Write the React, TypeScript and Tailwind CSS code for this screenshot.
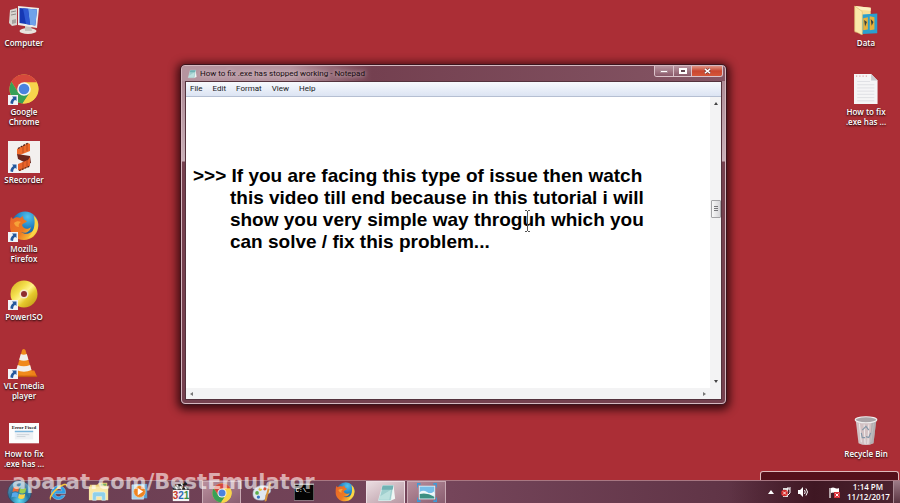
import { FC, ReactNode } from 'react'

const noteText = [
  '>>> If you are facing this type of issue then watch',
  '       this video till end because in this tutorial i will',
  '       show you very simple way throguh which you',
  '       can solve / fix this problem...',
].join('\n')

const ChromeIcon: FC = () => (
  <svg viewBox="0 0 30 30" className="size-full">
    <circle cx="15" cy="15" r="14.5" fill="#f3cf45" />
    <path d="M2.4 7.8A14.5 14.5 0 0 1 27.8 8.4L15 8.6 9.2 18.4z" fill="#d6473c" />
    <path d="M2.4 7.8A14.5 14.5 0 0 0 13.6 29.4L20.8 18.5 15 21.5 9.3 18.5z" fill="#38a156" />
    <path d="M27.8 8.4H15l6 10-7.4 11A14.5 14.5 0 0 0 27.8 8.4z" fill="#f7d54c" />
    <circle cx="15" cy="15" r="6.8" fill="#f5f5f0" />
    <circle cx="15" cy="15" r="5.3" fill="#4a83e0" />
  </svg>
)

const FirefoxIcon: FC = () => (
  <svg viewBox="0 0 30 30" className="size-full">
    <defs>
      <radialGradient id="fx-globe" cx=".6" cy=".2" r=".9">
        <stop offset="0" stopColor="#52c3ee" />
        <stop offset=".5" stopColor="#1c78bd" />
        <stop offset="1" stopColor="#173b78" />
      </radialGradient>
      <linearGradient id="fx-tail" x1="0" y1="0" x2="1" y2=".6">
        <stop offset="0" stopColor="#e8622a" />
        <stop offset=".6" stopColor="#ee7a22" />
        <stop offset="1" stopColor="#fbd23e" />
      </linearGradient>
    </defs>
    <circle cx="16" cy="14" r="13.5" fill="url(#fx-globe)" />
    <path
      d="M2 6l2 2c2-2 5-2 7-1l3-2c0 3 1 4 4 5-1 2-4 2-5 4 1 4 6 5 9 2-1 5-6 7-10 5 5 4 13 1 14-6 1-4 0-7-2-11 5 4 6 9 5 13-1 7-7 12-14 12C7 29 1 23 1 16 1 12 1 9 2 6z"
      fill="url(#fx-tail)"
    />
    <path d="M25 5c4 4 5 9 3 14-2 4-5 7-9 8 5-5 8-12 6-22z" fill="#fbd546" />
    <path d="M5 12c2-2 5-2 7-1-2 1-3 3-2 5-2 0-4-1-5-4z" fill="#f7a238" />
  </svg>
)

const NotepadIcon: FC = () => (
  <svg viewBox="0 0 24 24" className="size-full">
    <path d="M8 3h13l-3 18H3z" fill="#9fcfce" stroke="#d9efee" />
    <path d="M8 3h13l-1 5H6.600z" fill="#6fb1b3" />
    <path d="M5 16l13-8-2 12H4z" fill="#c9e8e5" opacity=".7" />
    <path d="M21 3l2 16-5 2z" fill="#f0f7f5" />
  </svg>
)

const ComputerIcon: FC = () => (
  <svg viewBox="0 0 30 30" className="size-full">
    <path d="M1 5l7-2v17l-5 1-3-3z" fill="#d9d5cf" />
    <path d="M2 7l5-1M2 10l5-1" stroke="#8e8b88" />
    <path d="M3 15l4-1v4l-4 1z" fill="#a7a39e" />
    <ellipse cx="19" cy="26" rx="8.500" ry="3" fill="#e8e4de" />
    <path d="M16 20h6l1 6h-7z" fill="#c8c3bd" />
    <path d="M9 1l21 2-2 20-19-3z" fill="#eeece8" />
    <path d="M10.500 3l17.500 1.600-1.700 16-15.800-2.600z" fill="#1638b4" />
    <path d="M19 3.800l9 .8-1.700 16-5.300-.9z" fill="#6fa2ea" />
    <path d="M14 3.300l5 .5 2 15.900-4-.7z" fill="#2e59d3" />
  </svg>
)

const SRecorderIcon: FC = () => (
  <svg viewBox="0 0 32 32" className="size-8 shrink-0">
    <path d="M0 0h32v32H0z" fill="#f3f0ee" />
    <path d="M9 8l11-6 2 1v7l-10 4-3-1z" fill="#ef6a2a" />
    <path d="M9 13l13 2 1 7-3 1-10-5z" fill="#6d251b" />
    <path d="M22 16v9l-10 5-2-1v-6l10-4z" fill="#e9632a" />
    <path d="M10 7.500L20 2M11 29.500L22 25" stroke="#4b211a" strokeWidth="1.200" strokeDasharray="2 1" />
    <path d="M15 5v7M15 21v7M19 3v7M19 19v7" stroke="#b84a1d" />
  </svg>
)

const PowerIsoIcon: FC = () => (
  <svg viewBox="0 0 30 30" className="size-full">
    <defs>
      <linearGradient id="disc" x1="0" y1="0" x2="1" y2="1">
        <stop offset="0" stopColor="#d2a51b" />
        <stop offset=".35" stopColor="#f4e04d" />
        <stop offset=".5" stopColor="#fff38c" />
        <stop offset=".65" stopColor="#e5c92c" />
        <stop offset="1" stopColor="#b98c12" />
      </linearGradient>
    </defs>
    <circle cx="15" cy="15" r="13.500" fill="url(#disc)" />
    <circle cx="15" cy="15" r="4.500" fill="#f3e9cb" />
    <circle cx="15" cy="15" r="3" fill="#8e2c2e" />
  </svg>
)

const VlcIcon: FC = () => (
  <svg viewBox="0 0 30 32" className="size-full">
    <path d="M4 24h22l3 7H1z" fill="#ee8218" />
    <path d="M1 29.500h28V31H1z" fill="#c35e10" />
    <path d="M13 2q1.500-2 3.500 0L24 27q-9 4-18 0z" fill="#f08a1c" />
    <path d="M11.600 6.500q3 1.500 6.400 0l1.800 6q-5 2-10 0z" fill="#f1efed" />
    <path d="M8.300 18q6.500 3 13.200 0l1.500 5.500q-8 3.500-16.300 0z" fill="#f1efed" />
  </svg>
)

const ErrorShotIcon: FC = () => (
  <svg viewBox="0 0 31 21" className="mt-1 w-full">
    <path d="M0 0h31v21H0z" fill="#fdfdfd" />
    <text x="15.500" y="6" textAnchor="middle" fontSize="5" fontWeight="700" fontFamily="Liberation Serif, serif" fill="#222">
      Error Fixed
    </text>
    <path d="M6 8h19v9H6z" fill="#eef1f4" />
    <path d="M6 8h19v1.500H6z" fill="#7cb6dc" />
    <path d="M8 12h13M8 14h9" stroke="#c5cdd4" strokeWidth=".8" />
  </svg>
)

const DataFolderIcon: FC = () => (
  <svg viewBox="0 0 30 32" className="size-full">
    <path d="M3 1l17 2v26H3z" fill="#f6dd95" />
    <path d="M3 1l17 2v3L8 5z" fill="#fdf0c0" />
    <path d="M11 10l16-1v21l-16 1z" fill="#2aa0cf" />
    <path d="M12 14l5-1v13l-5 1zM19 12l5 1v13l-5 1z" fill="#e8b13b" />
    <path d="M13 16l3 2-2 5zM20 15l3 3-2 4z" fill="#37433f" />
    <path d="M3 1l8 6v25l-8-4z" fill="#fbe9a9" stroke="#d9bb6b" strokeWidth=".6" />
  </svg>
)

const TextFileIcon: FC = () => (
  <svg viewBox="0 0 22 28" className="h-full">
    <path d="M0 0h16l6 6v22H0z" fill="#f5f5f6" />
    <path d="M16 0l6 6h-6z" fill="#c9cbd0" />
    <path d="M3 7h12M3 10h16M3 13h16M3 16h16M3 19h16M3 22h16M3 25h16" stroke="#dcdde2" strokeWidth=".8" />
    <path d="M2 2h12" stroke="#dc9a9a" strokeDasharray="1 2" />
  </svg>
)

const RecycleBinIcon: FC = () => (
  <svg viewBox="0 0 28 32" className="size-full">
    <path d="M3 4l22 0-3 25q-8 4-16 0z" fill="#d8dadc" opacity=".85" />
    <path d="M7 8l2 20M12 9l1 21M17 9l-1 21M22 8l-3 20" stroke="#f7f7f7" opacity=".8" />
    <path d="M20 6l5-1-3 24-4 1z" fill="#9fa1a5" opacity=".6" />
    <ellipse cx="14" cy="4" rx="11.500" ry="3.200" fill="#a9a3a6" stroke="#f0f0f0" strokeWidth="1.200" />
    <path d="M10 15l4-4 3 4M9 18l1 5h3M19 18l-2 5-3-1" fill="none" stroke="#8397a8" strokeWidth="1.200" />
  </svg>
)

const StartOrb: FC = () => (
  <svg viewBox="0 0 26 26" className="size-full">
    <defs>
      <radialGradient id="orb" cx=".5" cy=".85" r=".9">
        <stop offset="0" stopColor="#62dcf2" />
        <stop offset=".45" stopColor="#23719e" />
        <stop offset="1" stopColor="#7aa0b8" />
      </radialGradient>
    </defs>
    <circle cx="13" cy="13" r="12.300" fill="url(#orb)" stroke="#33455f" strokeWidth=".8" />
    <path d="M6.500 8q3-2 6 0l-.8 4.600q-3-2-6 0z" fill="#ec6a38" />
    <path d="M13.500 8.300q3 2 6.500 0l-.9 4.700q-3.200 2-6.400 0z" fill="#9bcf4f" />
    <path d="M5.400 13.700q3-2 6 0l-.8 4.600q-3-2-6 0z" fill="#58a9ea" />
    <path d="M12.400 14.200q3.200 2 6.500 0l-.9 4.600q-3.200 2-6.400 0z" fill="#fbd347" />
  </svg>
)

const IeIcon: FC = () => (
  <svg viewBox="0 0 24 24" className="size-full">
    <path
      d="M21 14H8.500c.4 4 5.500 4.800 7.500 1.800h4.500C17 24 4 22.500 4 13S17 1.500 20.500 9q.8 2 .5 5zM8.700 10.500h7.800c-.5-3.500-6.800-3.700-7.800 0z"
      fill="#2f9fe6"
      stroke="#bfe5fa"
      strokeWidth=".5"
    />
    <path d="M3 22C-2 17 14 1 21 2c3 .5 2 3 1 4.500.5-2-.5-2.800-2.500-2.500C13 6 3 16 3 22z" fill="#f5c640" />
  </svg>
)

const ExplorerIcon: FC = () => (
  <svg viewBox="0 0 24 22" className="size-full">
    <path d="M2 3h8l2-2h9v5H2z" fill="#e9cc73" />
    <path d="M1 5h21v15H1z" fill="#f9e7a4" />
    <path d="M14 2h6v2h-6z" fill="#71b26a" />
    <path d="M5 20v-7q0-2 2-2h10q2 0 2 2v7h-4v-4H9v4z" fill="#8fd0ea" stroke="#dff3fb" strokeWidth=".6" />
  </svg>
)

const MediaPlayerIcon: FC = () => (
  <svg viewBox="0 0 20 20" className="size-full">
    <path d="M5 1h13v16H5z" fill="#5c9fd0" />
    <path d="M1 2h13v16H1z" fill="#a8d3ee" stroke="#e3f2fb" strokeWidth=".6" />
    <circle cx="9.500" cy="9.500" r="6.500" fill="#ef8422" stroke="#fbd9ae" strokeWidth=".6" />
    <path d="M7.500 5.500l6 4-6 4z" fill="#fff" />
  </svg>
)

const PlayerClassicIcon: FC = () => (
  <svg viewBox="0 0 20 22" className="size-full">
    <path d="M1 8h18v13H1z" fill="#f4f4f4" />
    <path d="M1 5h18v3.500H1zM1 4l15-4 1 3-15 4z" fill="#1e1e1e" />
    <path d="M4 5l2 3M9 5l2 3M14 5l2 3M5 3l2 2M10 2l2 2" stroke="#f4f4f4" strokeWidth="1.500" />
    <g fontSize="11" fontWeight="700" fontFamily="Liberation Sans, sans-serif">
      <text x="1" y="19" fill="#c93b2f">3</text>
      <text x="7" y="19" fill="#2d69b9">2</text>
      <text x="13" y="19" fill="#3b9147">1</text>
    </g>
  </svg>
)

const PaintIcon: FC = () => (
  <svg viewBox="0 0 24 24" className="size-full">
    <path d="M1 14C1 7 8 4 14 5s7 4 6 7-5 1-5 4 1 5-5 5-9-2-9-7z" fill="#dfe8f0" stroke="#9fb2c4" strokeWidth=".6" />
    <circle cx="5.500" cy="13" r="2" fill="#5aae4b" />
    <circle cx="9" cy="9" r="1.800" fill="#e4c23c" />
    <circle cx="14" cy="8.500" r="1.800" fill="#d9503c" />
    <circle cx="7" cy="17.500" r="1.800" fill="#3775c4" />
    <path d="M19 1l2 1-5 19-2 2v-3z" fill="#d9963a" />
  </svg>
)

const CmdIcon: FC = () => (
  <svg viewBox="0 0 20 17" className="size-full">
    <path d="M0 0h20v17H0z" fill="#a9a9a9" />
    <path d="M.5 1.500h19v15H.5z" fill="#050505" />
    <text x="1.500" y="8" fontSize="6" fontWeight="700" fontFamily="Liberation Mono, monospace" fill="#eee">
      C:\_
    </text>
  </svg>
)

const PictureIcon: FC = () => (
  <svg viewBox="0 0 22 20" className="size-full">
    <path d="M2 2h18v15H2z" fill="#dceff8" />
    <path d="M3 3h16v7H3z" fill="#76bde9" />
    <path d="M3 9q4-3 8 0t8-1v4H3z" fill="#f0f8fa" />
    <path d="M3 11q8-2 16 3v2H3z" fill="#3d8f83" />
    <path d="M0 4V0h4M18 0h4v4M22 15v4h-4M4 19H0v-4" fill="none" stroke="#3c9bd9" strokeWidth="2" />
  </svg>
)

const ShortcutArrow: FC = () => (
  <svg viewBox="0 0 10 10" className="absolute bottom-0 left-0 size-[10px]">
    <path d="M0 0h10v10H0z" fill="#f2f4f7" />
    <path d="M4 1.500h4.500V6L7 4.700Q5 6 5 9L2.500 8.500Q2 5.500 5.300 3z" fill="#24589c" />
  </svg>
)

interface DesktopIconProps {
  label: string
  icon: ReactNode
  shortcut?: boolean
  className?: string
}

const DesktopIcon: FC<DesktopIconProps> = ({ label, icon, shortcut, className }) => (
  <button type="button" className={`flex w-12 flex-col items-center pt-1 ${className ?? ''}`}>
    <span className="relative flex h-8 w-8 items-center justify-center">
      <span className="flex size-[30px] items-center justify-center">{icon}</span>
      {shortcut && <ShortcutArrow />}
    </span>
    <span className="mt-[2px] whitespace-pre-line text-center text-[8px] leading-[10px] font-semibold text-white [text-shadow:0_1px_2px_#000]">
      {label}
    </span>
  </button>
)

const taskbarItems: { label: string; icon: ReactNode; size: string; state?: 'open' | 'active' }[] = [
  { label: 'Internet Explorer', icon: <IeIcon />, size: 'size-5' },
  { label: 'Windows Explorer', icon: <ExplorerIcon />, size: 'size-[22px]' },
  { label: 'Media Player', icon: <MediaPlayerIcon />, size: 'size-[18px]' },
  { label: 'Player Classic', icon: <PlayerClassicIcon />, size: 'size-5' },
  { label: 'Google Chrome', icon: <ChromeIcon />, size: 'size-5', state: 'open' },
  { label: 'Paint', icon: <PaintIcon />, size: 'size-[22px]' },
  { label: 'Command Prompt', icon: <CmdIcon />, size: 'size-5' },
  { label: 'Firefox', icon: <FirefoxIcon />, size: 'size-5' },
  { label: 'Notepad', icon: <NotepadIcon />, size: 'size-5', state: 'active' },
  { label: 'Picture Viewer', icon: <PictureIcon />, size: 'size-5', state: 'open' },
]

const stateStyles = {
  none: '',
  open: 'border border-b-0 border-[#c9aab4] bg-gradient-to-br from-[#b88f9d] to-[#8a5e70]',
  active: 'border border-b-0 border-[#eddde2] bg-gradient-to-br from-[#eadde1] to-[#b797a2]',
}

const Taskbar: FC = () => (
  <footer className="relative flex h-[23px] shrink-0 border-t border-[#a87782] bg-gradient-to-r from-[#6b3e52] via-[#75455a] to-[#532a3a]">
    <button type="button" aria-label="Start" className="flex w-[38px] items-center justify-center">
      <span className="size-[25px]">
        <StartOrb />
      </span>
    </button>
    <nav className="flex">
      {taskbarItems.map((item) => (
        <button
          key={item.label}
          type="button"
          aria-label={item.label}
          className={`mr-[2px] flex w-[39px] items-center justify-center ${stateStyles[item.state ?? 'none']}`}
        >
          <span className={item.size}>{item.icon}</span>
        </button>
      ))}
    </nav>
    <div className="ml-auto flex items-center bg-gradient-to-r from-transparent via-[#3f1723] to-[#4c2431] pl-10 text-white">
      <button type="button" aria-label="Show hidden icons" className="mr-[7px]">
        <svg viewBox="0 0 6 4" className="w-[6px]">
          <path d="M0 4l3-4 3 4z" fill="#fff" />
        </svg>
      </button>
      <svg viewBox="0 0 10 12" className="mr-[7px] h-3 w-[10px]">
        <path d="M2 2h5v9H2z" fill="#ddd" />
        <path d="M6 3h3v4L7 9M7 1v2M9 1v2" fill="none" stroke="#fff" />
        <circle cx="3.500" cy="7" r="3.300" fill="#d32a2a" />
        <path d="M2 5.500l3 3m0-3l-3 3" stroke="#fff" strokeWidth=".9" />
      </svg>
      <svg viewBox="0 0 10 10" className="mr-[21px] size-[10px]">
        <path d="M0 3h2l3-3v10L2 7H0z" fill="#fff" />
        <path d="M6.500 3q1.500 2 0 4M8 1.500q3 3.500 0 7" fill="none" stroke="#fff" />
      </svg>
      <svg viewBox="0 0 11 11" className="mr-[7px] size-[11px]">
        <path d="M1 1v10" stroke="#fff" strokeWidth="1.200" />
        <path d="M2 1q2-1 4 0t4 0v5q-2 1-4 0T2 6z" fill="#fff" />
        <path d="M5 5h6v6H5z" fill="#d8303a" />
        <path d="M6.500 6.500l3 3m0-3l-3 3" stroke="#fff" />
      </svg>
      <time className="w-[42px] text-center text-[8px] leading-[10px] font-semibold whitespace-nowrap">
        1:14 PM
        <br />
        11/12/2017
      </time>
      <button
        type="button"
        aria-label="Show desktop"
        className="ml-1 h-full w-[7px] border-l border-[#a98a94] bg-gradient-to-b from-[#9c7b87] to-[#5a3542]"
      />
    </div>
  </footer>
)

const NotepadWindow: FC = () => (
  <section className="absolute inset-x-0 top-16 bottom-[75px] mr-[173px] ml-[180px] flex flex-col rounded-[5px] border border-[#3b141d] bg-[#7b4657] shadow-[0_2px_9px_3px_rgba(25,0,5,0.75)]">
    <div className="flex min-h-0 flex-1 flex-col rounded-[4px] border border-[#d5b8c0] bg-[linear-gradient(to_bottom,#a98490_0,#c9b0b8_95px,#75414f_96px,#75414f_100%)] px-[3px] pb-[3px]">
      <header className="-mx-[3px] flex h-[15px] shrink-0 items-center rounded-t-[4px] bg-gradient-to-r from-[#b5949f] from-20% via-[#744050] via-35% to-[#845564] pl-[5px]">
        <span className="size-[10px]">
          <NotepadIcon />
        </span>
        <h1 className="ml-[3px] font-[Roboto,sans-serif] text-[8px] leading-3 whitespace-nowrap text-[#160a0e] [text-shadow:0_0_4px_#f5e8ec]">
          How to fix .exe has stopped working - Notepad
        </h1>
        <div className="mr-[2px] ml-auto flex h-[11px] self-start overflow-hidden rounded-b-[3px] border border-t-0 border-[#dbc3ca]">
          <button
            type="button"
            aria-label="Minimize"
            className="flex w-[19px] items-center justify-center border-r border-[#dbc3ca] bg-gradient-to-b from-[#b8949f] to-[#8a5a6a]"
          >
            <span className="h-[3px] w-2 border border-[#a98a94] bg-white" />
          </button>
          <button
            type="button"
            aria-label="Maximize"
            className="flex w-[18px] items-center justify-center border-r border-[#dbc3ca] bg-gradient-to-b from-[#b8949f] to-[#8a5a6a]"
          >
            <span className="h-[6px] w-2 border-2 border-white bg-[#634752]" />
          </button>
          <button
            type="button"
            aria-label="Close"
            className="flex w-[30px] items-center justify-center bg-gradient-to-b from-[#de9284] via-[#c94630] to-[#d5573a]"
          >
            <svg viewBox="0 0 8 7" className="w-[7px]">
              <path d="M1 1l6 5M7 1L1 6" stroke="#6b3030" strokeWidth="3" />
              <path d="M1 1l6 5M7 1L1 6" stroke="#fff" strokeWidth="1.800" />
            </svg>
          </button>
        </div>
      </header>
      <div className="flex min-h-0 flex-1 flex-col border border-[#54323d] bg-white">
        <nav className="flex h-[15px] shrink-0 items-center gap-[10px] border-b border-[#b5bfd2] bg-gradient-to-b from-[#f7f9fd] to-[#dce4f3] pl-1 font-[Roboto,sans-serif] text-[8px] leading-3 text-[#1a1a22]">
          <button type="button">File</button>
          <button type="button">Edit</button>
          <button type="button">Format</button>
          <button type="button">View</button>
          <button type="button">Help</button>
        </nav>
        <div className="flex min-h-0 flex-1">
          <textarea
            aria-label="Document text"
            spellCheck={false}
            wrap="off"
            defaultValue={noteText}
            className="min-w-0 flex-1 resize-none overflow-hidden pt-[68px] pl-[7px] font-['Liberation_Sans',Arial,sans-serif] text-[19px] leading-[22px] font-bold text-black outline-none"
          />
          <div className="flex w-[11px] flex-col items-center justify-between bg-[#f3f3f4] py-[5px]">
            <svg viewBox="0 0 4 3" className="w-1">
              <path d="M0 3l2-3 2 3z" fill="#444" />
            </svg>
            <div className="mb-[68px] flex h-[18px] w-[10px] flex-col items-center justify-center gap-px rounded-[1px] border border-[#a3a3a6] bg-gradient-to-r from-[#f8f8f8] to-[#d6d6d9]">
              <span className="h-px w-1 bg-[#77777b]" />
              <span className="h-px w-1 bg-[#77777b]" />
              <span className="h-px w-1 bg-[#77777b]" />
            </div>
            <svg viewBox="0 0 4 3" className="w-1">
              <path d="M0 0l2 3 2-3z" fill="#444" />
            </svg>
          </div>
        </div>
        <div className="flex h-[11px] shrink-0 items-center justify-between bg-[#f3f3f4] pr-[15px] pl-1">
          <svg viewBox="0 0 3 4" className="h-1">
            <path d="M3 0L0 2l3 2z" fill="#777" />
          </svg>
          <svg viewBox="0 0 3 4" className="h-1">
            <path d="M0 0l3 2-3 2z" fill="#777" />
          </svg>
        </div>
      </div>
    </div>
    {/* text cursor */}
    <svg viewBox="0 0 7 22" className="absolute top-[145px] left-[343px] h-[22px] w-[7px]">
      <path d="M1 .5h2M4 .5h2M3.500 1v20M1 21.500h2M4 21.500h2" stroke="#555" />
    </svg>
  </section>
)

export default function App() {
  return (
    <main className="relative flex h-screen flex-col overflow-hidden bg-[#ab2e36] font-['Open_Sans','Noto_Sans',sans-serif]">
      <div className="relative flex min-h-0 flex-1 justify-between">
        <div className="grid grid-rows-7">
          <DesktopIcon label="Computer" icon={<ComputerIcon />} />
          <DesktopIcon label={'Google\nChrome'} icon={<ChromeIcon />} shortcut />
          <DesktopIcon label="SRecorder" icon={<SRecorderIcon />} shortcut />
          <DesktopIcon label={'Mozilla\nFirefox'} icon={<FirefoxIcon />} shortcut />
          <DesktopIcon label="PowerISO" icon={<PowerIsoIcon />} shortcut />
          <DesktopIcon label={'VLC media\nplayer'} icon={<VlcIcon />} shortcut />
          <DesktopIcon label={'How to fix\n.exe has ...'} icon={<ErrorShotIcon />} />
        </div>
        <div className="mr-[10px] grid grid-rows-7">
          <DesktopIcon label="Data" icon={<DataFolderIcon />} />
          <DesktopIcon label={'How to fix\n.exe has ...'} icon={<TextFileIcon />} />
          <DesktopIcon label="Recycle Bin" icon={<RecycleBinIcon />} className="row-start-7" />
        </div>
        <NotepadWindow />
        <div className="absolute right-px bottom-0 h-[9px] w-[139px] rounded-t-[3px] border border-b-0 border-[#e0b9ba] bg-[#55101a]" />
      </div>
      <Taskbar />
      <p className="pointer-events-none absolute bottom-[9px] left-3 font-['DejaVu_Sans',sans-serif] text-[21px] leading-6 font-bold whitespace-nowrap text-white/60">
        aparat.com/BestEmulator
      </p>
    </main>
  )
}
